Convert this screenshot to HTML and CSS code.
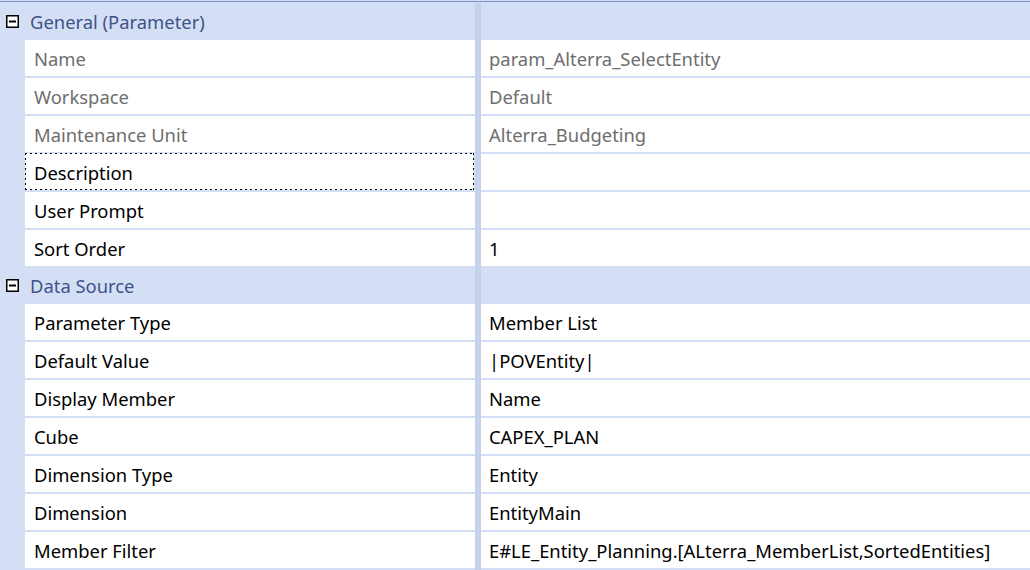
FILE: index.html
```html
<!DOCTYPE html>
<html>
<head>
<meta charset="utf-8">
<link rel="stylesheet" href="styles.css">
</head>
<body>
<div class="grid">
  <div class="group">
    <div class="header">
      <span class="exp"><svg width="13" height="13" viewBox="0 0 13 13"><rect x="0.75" y="0.75" width="11.5" height="11.5" fill="#fff" stroke="#000" stroke-width="1.5"/><rect x="3" y="5.5" width="7" height="2" fill="#000"/></svg></span>
      <span class="htext">General (Parameter)</span>
    </div>
    <div class="items">
      <div class="row ro"><div class="k">Name</div><div class="sep"></div><div class="v">param_Alterra_SelectEntity</div></div>
      <div class="row ro"><div class="k">Workspace</div><div class="sep"></div><div class="v">Default</div></div>
      <div class="row ro"><div class="k">Maintenance Unit</div><div class="sep"></div><div class="v">Alterra_Budgeting</div></div>
      <div class="row"><div class="k focus">Description</div><div class="sep"></div><div class="v"></div></div>
      <div class="row"><div class="k">User Prompt</div><div class="sep"></div><div class="v"></div></div>
      <div class="row"><div class="k">Sort Order</div><div class="sep"></div><div class="v">1</div></div>
    </div>
  </div>
  <div class="group">
    <div class="header">
      <span class="exp"><svg width="13" height="13" viewBox="0 0 13 13"><rect x="0.75" y="0.75" width="11.5" height="11.5" fill="#fff" stroke="#000" stroke-width="1.5"/><rect x="3" y="5.5" width="7" height="2" fill="#000"/></svg></span>
      <span class="htext">Data Source</span>
    </div>
    <div class="items">
      <div class="row"><div class="k">Parameter Type</div><div class="sep"></div><div class="v">Member List</div></div>
      <div class="row"><div class="k">Default Value</div><div class="sep"></div><div class="v">|POVEntity|</div></div>
      <div class="row"><div class="k">Display Member</div><div class="sep"></div><div class="v">Name</div></div>
      <div class="row"><div class="k">Cube</div><div class="sep"></div><div class="v">CAPEX_PLAN</div></div>
      <div class="row"><div class="k">Dimension Type</div><div class="sep"></div><div class="v">Entity</div></div>
      <div class="row"><div class="k">Dimension</div><div class="sep"></div><div class="v">EntityMain</div></div>
      <div class="row"><div class="k">Member Filter</div><div class="sep"></div><div class="v">E#LE_Entity_Planning.[ALterra_MemberList,SortedEntities]</div></div>
    </div>
  </div>
</div>
</body>
</html>
```

FILE: styles.css
```css
* { box-sizing: border-box; }
html, body {
  margin: 0;
  padding: 0;
  width: 1030px;
  height: 570px;
  overflow: hidden;
  background: #d4dff5;
}
body {
  font-family: "Noto Sans", "Open Sans", sans-serif;
  font-size: 18.4px;
}
.grid {
  height: 570px;
  border-top: 1px solid #d4dff5;
  box-shadow: inset 0 1px 0 #7b8ec6;
  padding-top: 1px;
  background:
    linear-gradient(to right, transparent 475px, #c5d2ec 475px, #c5d2ec 481px, transparent 481px) no-repeat 0 2px / 100% 100%,
    #d4dff5;
}
.header {
  height: 38px;
  display: flex;
  align-items: center;
}
.exp {
  display: flex;
  width: 30px;
  padding-left: 6px;
  padding-top: 1px;
}
.htext {
  color: #3e5489;
  padding-top: 1px;
}
.items {
  display: flex;
  flex-direction: column;
  gap: 2px;
}
.row {
  height: 36px;
  display: grid;
  grid-template-columns: 450px 6px 1fr;
  margin-left: 25px;
  color: #000;
}
.k, .v {
  background: #fff;
  display: flex;
  align-items: center;
  white-space: nowrap;
}
.k { padding-left: 9px; }
.v { padding-left: 8px; }
.ro .k, .ro .v { color: #6e6e6e; }
.row .focus {
  margin-top: -1px;
  background:
    repeating-linear-gradient(to right, #000 0 2px, transparent 2px 5px) left top / 100% 1px no-repeat,
    repeating-linear-gradient(to right, #000 0 2px, transparent 2px 5px) left bottom / 100% 1px no-repeat,
    repeating-linear-gradient(to bottom, #000 0 2px, transparent 2px 5px) left top / 1px 100% no-repeat,
    repeating-linear-gradient(to bottom, #000 0 2px, transparent 2px 5px) right top / 1px 100% no-repeat,
    #fff;
  padding-top: 1px;
  width: 449px;
}
```
